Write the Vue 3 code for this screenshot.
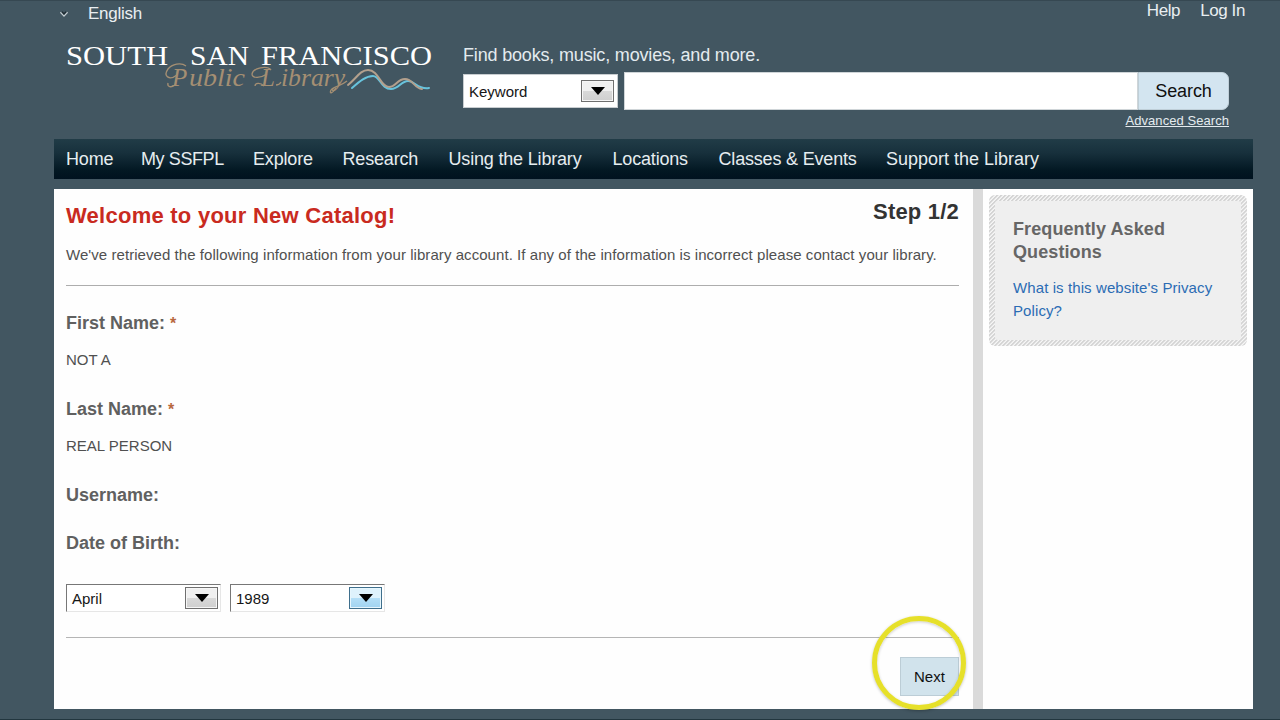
<template>
  <div class="page">
    <header class="header">
      <div class="topbar">
        <div class="language">
          <svg class="chevron" viewBox="0 0 10 8" width="10" height="8">
            <path d="M1.4 2.2 L5 6 L8.6 2.2" />
            <path class="chevron-shade" d="M3 1.8 L5 4 L7 1.8" />
          </svg>
          <span>English</span>
        </div>
        <div class="account">
          <a>Help</a>
          <a>Log In</a>
        </div>
      </div>

      <div class="masthead">
        <svg class="logo" viewBox="0 0 372 60" width="372" height="60">
          <g class="logo-name">
            <text x="1" y="25" textLength="102" lengthAdjust="spacingAndGlyphs">SOUTH</text>
            <text x="125" y="25" textLength="59" lengthAdjust="spacingAndGlyphs">SAN</text>
            <text x="196" y="25" textLength="171" lengthAdjust="spacingAndGlyphs">FRANCISCO</text>
          </g>
          <g class="logo-script">
            <text x="107" y="46">P<tspan x="124" textLength="56" lengthAdjust="spacingAndGlyphs">ublic</tspan></text>
            <text x="196" y="46">L<tspan x="216" textLength="64" lengthAdjust="spacingAndGlyphs">ibrary</tspan></text>
            <path d="M112 35 C104 41 98 36 103 29 C107 24 116 22 121 26" />
            <path d="M110 45 C106 48 102 47 103 43" />
            <path d="M206 30 C202 25 188 28 187 34 C187 39 196 38 202 34" />
            <path d="M199 46 C195 42 190 43 190 46 M211 45 C213 45 215 44 216 42" />
            <path d="M271 48 C267 54 264 54 266 50 C268 47 276 46 282 41" />
          </g>
          <path class="wave-blue" d="M287 48 C295 41 301 36 308 36 C315 36 316 49 326 49 C334 49 336 41 343 41 C350 41 353 50 364 48" />
          <path class="wave-tan" d="M283 45 C291 39 295 30 303 30 C314 30 315 47 324 47 C331 47 332 39 340 39 C348 39 349 48 357 49" />
        </svg>

        <div class="search">
          <div class="search-title">Find books, music, movies, and more.</div>
          <div class="search-row">
            <div class="select select-search">
              <span>Keyword</span>
              <i class="arrow"></i>
            </div>
            <input class="search-input" type="text" v-model="query">
            <button class="search-btn">Search</button>
          </div>
          <a class="advanced">Advanced Search</a>
        </div>
      </div>
    </header>

    <nav class="nav">
      <a v-for="item in menu" :key="item">{{ item }}</a>
    </nav>

    <div class="content">
      <main class="main">
        <div class="heading">
          <h1>Welcome to your New Catalog!</h1>
          <span class="step">Step 1/2</span>
        </div>
        <p class="intro">We've retrieved the following information from your library account. If any of the information is incorrect please contact your library.</p>

        <div class="form">
          <div class="field" v-for="field in fields" :key="field.label">
            <div class="label">{{ field.label }} <span v-if="field.required" class="required">*</span></div>
            <div v-if="field.value" class="value">{{ field.value }}</div>
          </div>
          <div class="birth">
            <div class="select">
              <span>April</span>
              <i class="arrow"></i>
            </div>
            <div class="select">
              <span>1989</span>
              <i class="arrow arrow-hover"></i>
            </div>
          </div>
        </div>

        <div class="actions">
          <button class="next">Next</button>
        </div>
      </main>

      <aside class="side">
        <div class="faq">
          <div class="faq-inner">
            <h2>Frequently Asked Questions</h2>
            <a>What is this website's Privacy Policy?</a>
          </div>
        </div>
      </aside>
    </div>

    <div class="highlight"></div>
  </div>
</template>

<script setup>
import { ref } from 'vue';

const query = ref('');

const menu = [
  'Home',
  'My SSFPL',
  'Explore',
  'Research',
  'Using the Library',
  'Locations',
  'Classes & Events',
  'Support the Library',
];

const fields = [
  { label: 'First Name:', value: 'NOT A', required: true },
  { label: 'Last Name:', value: 'REAL PERSON', required: true },
  { label: 'Username:' },
  { label: 'Date of Birth:' },
];
</script>

<style>
body {
  margin: 0;
  background: #425661;
}
</style>

<style scoped>
.page {
  position: relative;
  box-sizing: border-box;
  width: 1280px;
  height: 720px;
  padding: 0 27px 0 54px;
  overflow: hidden;
  background: #425661;
  border-top: 1px solid #364852;
  border-bottom: 1px solid #22363f;
  font-family: "Liberation Sans", Arial, sans-serif;
  font-size: 15px;
  color: #505050;
}

.header {
  height: 138px;
}

.topbar {
  display: flex;
  justify-content: space-between;
  height: 39px;
  font-size: 17px;
  line-height: 18px;
  letter-spacing: -.25px;
  color: #e9eef1;
}

.language {
  display: flex;
  align-items: center;
  gap: 19px;
  height: 18px;
  padding: 4px 0 0 5px;
}

.chevron path {
  fill: none;
  stroke: #c3ccd1;
  stroke-width: 1.3;
}

.chevron .chevron-shade {
  stroke: #1d2a31;
}

.account {
  display: flex;
  gap: 20px;
  padding: 1px 8px 0 0;
}

.account a {
  letter-spacing: -.4px;
}

.masthead {
  display: flex;
}

.logo {
  margin-left: 11px;
  flex: none;
}

.logo-name text {
  font-family: "Liberation Serif", serif;
  font-size: 27px;
  fill: #fff;
}

.logo-script text {
  font-family: "Liberation Serif", serif;
  font-style: italic;
  font-size: 25px;
  fill: #a58f73;
}

.logo-script path {
  fill: none;
  stroke: #a58f73;
  stroke-width: 1.3;
}

.wave-blue,
.wave-tan {
  fill: none;
  stroke-width: 2;
  stroke-linecap: round;
}

.wave-blue {
  stroke: #68c3dc;
}

.wave-tan {
  stroke: #b3a08d;
}

.search {
  width: 766px;
  margin-left: 26px;
  padding-top: 5px;
}

.search-title {
  height: 27px;
  font-size: 18px;
  line-height: 20px;
  letter-spacing: -.17px;
  color: #e4ebef;
}

.search-row {
  display: flex;
  align-items: center;
  height: 38px;
}

.select {
  box-sizing: border-box;
  display: flex;
  align-items: center;
  justify-content: space-between;
  width: 155px;
  height: 28px;
  padding: 0 2px 0 5px;
  background: #fff;
  border: 1px solid #e6e6e6;
  border-top: 1px solid #777;
  border-left: 1px solid #777;
  color: #161616;
}

.select-search {
  height: 34px;
  margin-right: 6px;
  padding-right: 3px;
  border-color: #c8cdd0;
}

.arrow {
  box-sizing: border-box;
  display: flex;
  align-items: center;
  justify-content: center;
  width: 33px;
  height: 22px;
  border: 1px solid #6f6f6f;
  box-shadow: inset 0 0 0 1px #f6f6f6;
  background: linear-gradient(#f0f0f0 50%, #d9d9d9 50%, #cfcfcf);
}

.arrow::before {
  content: '';
  border: 7px solid transparent;
  border-top: 8px solid #000;
  border-bottom: 0;
}

.arrow-hover {
  border-color: #3f6f8c;
  box-shadow: inset 0 0 0 1px #e6f6fd;
  background: linear-gradient(#def2fc 50%, #b4dff7 50%, #a0d3f0);
}

.search-input {
  box-sizing: border-box;
  flex: 1;
  min-width: 0;
  height: 38px;
  padding: 0 8px;
  border: 1px solid #cfd5d8;
  border-radius: 0;
  outline: 0;
  background: #fff;
}

.search-btn {
  box-sizing: border-box;
  width: 91px;
  height: 38px;
  padding: 0;
  border: 1px solid #bfcfd8;
  border-radius: 0 7px 7px 0;
  background: #d3e5f0;
  font: 18px "Liberation Sans", Arial, sans-serif;
  letter-spacing: -.1px;
  color: #101010;
}

.advanced {
  display: block;
  margin-top: 3px;
  font-size: 13px;
  line-height: 16px;
  letter-spacing: .06px;
  text-align: right;
  text-decoration: underline;
  color: #e4ebef;
}

.nav {
  display: grid;
  grid-template-columns: 75px 112px 89.5px 106px 164px 106px 167.5px auto;
  height: 40px;
  padding-left: 12px;
  background: linear-gradient(#213c47, #17303c 35%, #021722 80%, #00121f);
  font-size: 18px;
  line-height: 40px;
  letter-spacing: -.18px;
  color: #e6edf0;
  white-space: nowrap;
}

.nav a:nth-child(2) {
  letter-spacing: -.4px;
}

.nav a:last-child {
  letter-spacing: 0;
}

.content {
  display: flex;
  height: 520px;
  margin-top: 10px;
  background: #fefefe;
}

.main {
  width: 893px;
  padding: 0 14px 0 12px;
  border-right: 10px solid #dadada;
  box-sizing: content-box;
}

.heading {
  display: flex;
  justify-content: space-between;
  height: 53px;
  font-size: 22px;
  font-weight: bold;
  letter-spacing: .2px;
}

.heading h1 {
  margin: 14px 0 0;
  font-size: 22px;
  line-height: 26px;
  letter-spacing: .25px;
  color: #c92a20;
}

.step {
  padding-top: 10px;
  line-height: 26px;
  color: #333;
}

.intro {
  margin: 0;
  padding-top: 3px;
  height: 40px;
  line-height: 20px;
  letter-spacing: .06px;
  white-space: nowrap;
  border-bottom: 1px solid #adadad;
}

.form {
  box-sizing: border-box;
  height: 352px;
  padding-top: 26px;
  border-bottom: 1px solid #b5b5b5;
}

.label {
  height: 24px;
  padding-bottom: 14px;
  font-size: 18px;
  font-weight: bold;
  line-height: 22px;
  color: #606060;
}

.required {
  font-size: 16px;
  color: #b8683f;
}

.value {
  height: 20px;
  padding-bottom: 18px;
  line-height: 20px;
}

.field {
  padding-bottom: 10px;
}

.birth {
  display: flex;
  gap: 9px;
  margin-top: 4px;
}

.actions {
  display: flex;
  justify-content: flex-end;
  padding-top: 19px;
}

.next {
  box-sizing: border-box;
  width: 59px;
  height: 39px;
  padding: 0;
  border: 1px solid #bccdd6;
  background: #d1e3ec;
  font: 15px "Liberation Sans", Arial, sans-serif;
  letter-spacing: .1px;
  color: #101010;
}

.side {
  flex: 1;
  padding: 6px 6px 0;
}

.faq {
  box-sizing: border-box;
  height: 151px;
  padding: 6px;
  border-radius: 6px;
  background: repeating-linear-gradient(135deg, #d4d4d4 0, #d4d4d4 1px, #f6f6f6 1.6px, #f6f6f6 2.2px, #d4d4d4 2.83px);
}

.faq-inner {
  box-sizing: border-box;
  height: 139px;
  padding: 17px 10px 0 18px;
  border-radius: 3px;
  background: #efefef;
}

.faq h2 {
  margin: 0 0 13px;
  font-size: 18px;
  line-height: 23px;
  letter-spacing: .1px;
  color: #666;
}

.faq a {
  display: block;
  line-height: 22.5px;
  letter-spacing: .1px;
  color: #2b6cb4;
}

/* click ring drawn over the Next button */
.highlight {
  position: absolute;
  left: 872px;
  top: 615px;
  box-sizing: border-box;
  width: 94px;
  height: 94px;
  border: 5px solid #e6e02a;
  border-radius: 50%;
  box-shadow: 0 1px 3px rgba(0, 0, 0, .25), inset 0 1px 3px rgba(0, 0, 0, .2);
}
</style>
